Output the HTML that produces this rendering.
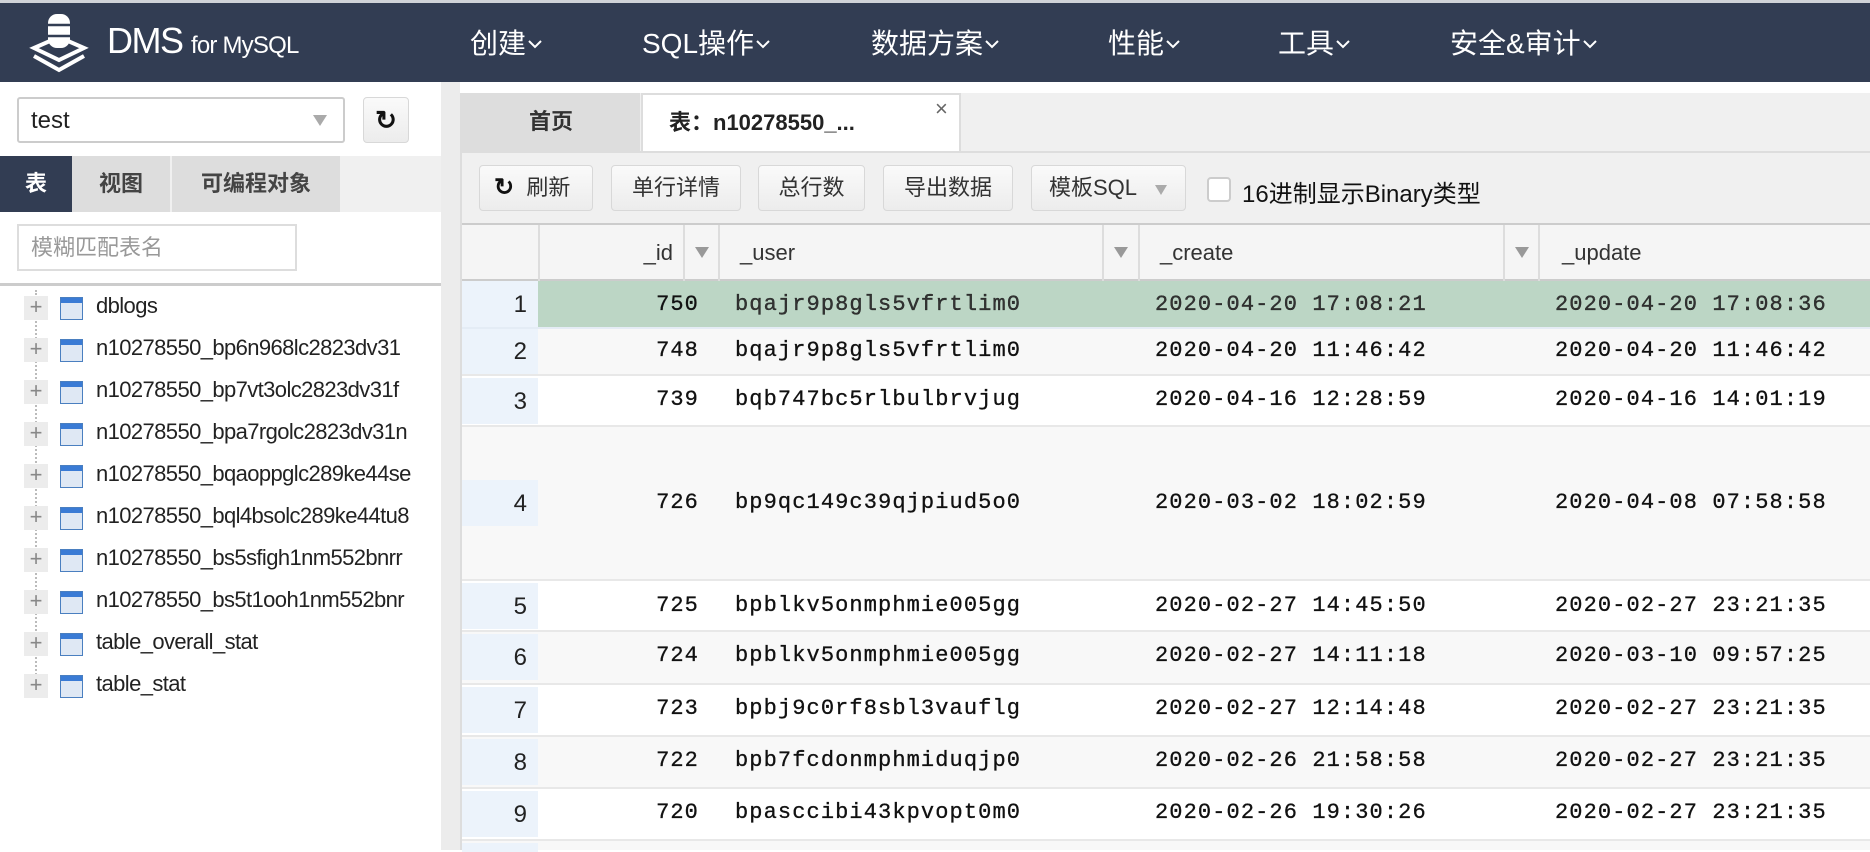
<!DOCTYPE html>
<html><head><meta charset="utf-8"><style>
*{margin:0;padding:0;box-sizing:border-box}
body{width:1870px;height:850px;overflow:hidden;background:#fff;position:relative;font-family:"Liberation Sans","Noto Sans CJK SC",sans-serif;color:#222}
.a{position:absolute}
.hdr{left:0;top:0;width:1870px;height:82px;background:#323d53;border-top:3px solid #d0d3d8}
.menu{top:22px;font-size:28px;color:#fff;white-space:nowrap}
.menu svg{margin-left:2px;vertical-align:4px}
.btn{background:linear-gradient(#fafafa,#ececec);border:1px solid #d8d8d8;border-radius:4px;font-size:22px;color:#333;text-align:center;line-height:44px}
.tree{left:24px;font-size:22px;height:26px}
.tree .p{position:absolute;left:0;top:0;width:24px;height:24px;background:#ececec;color:#888;font-size:22px;line-height:22px;text-align:center}
.tree .i{position:absolute;left:36px;top:1px;width:23px;height:23px;background:linear-gradient(#3a7bd5 0 5px,#dfe8f4 5px);border:1px solid #4a7fc0}
.tree .t{position:absolute;left:72px;top:-3px;white-space:nowrap;width:345px;overflow:hidden;letter-spacing:-0.6px}
.row{left:462px;width:1408px}
.rn{position:absolute;left:0;width:76px;background:#ecf3fb;font-size:24px;text-align:right;padding-right:11px}
.mono{position:absolute;font-family:"Liberation Mono",monospace;font-size:22px;letter-spacing:1.1px;color:#111;white-space:nowrap;-webkit-text-stroke:0.3px #111}
.hc{position:absolute;top:0;height:56px;border-left:2px solid #ddd;font-size:22px;line-height:56px;color:#333}
.arr{width:0;height:0;border-left:7px solid transparent;border-right:7px solid transparent;border-top:11px solid #999;position:absolute}
</style></head><body>
<div class="a hdr"></div>
<svg class="a" style="left:28px;top:10px" width="62" height="64" viewBox="0 0 62 64">
<path d="M6 38 L31 27 L56 38 L31 50 Z" fill="none" stroke="#fff" stroke-width="4"/>
<path d="M6 46 L31 60 L56 46" fill="none" stroke="#fff" stroke-width="4"/>
<rect x="20" y="4" width="22" height="34" rx="9" fill="#fff"/>
<line x1="20" y1="15" x2="42" y2="15" stroke="#323d53" stroke-width="2.5"/>
<line x1="20" y1="26" x2="42" y2="26" stroke="#323d53" stroke-width="2.5"/>
</svg>
<div class="a menu" style="left:107px;top:20px;font-size:36px;letter-spacing:-1.5px">DMS <span style="font-size:24px;letter-spacing:-0.8px">for MySQL</span></div>
<div class="a menu" style="left:470px">创建<svg width="14" height="9" viewBox="0 0 14 9"><path d="M1 1 L7 7 L13 1" fill="none" stroke="#fff" stroke-width="2"/></svg></div>
<div class="a menu" style="left:642px">SQL操作<svg width="14" height="9" viewBox="0 0 14 9"><path d="M1 1 L7 7 L13 1" fill="none" stroke="#fff" stroke-width="2"/></svg></div>
<div class="a menu" style="left:871px">数据方案<svg width="14" height="9" viewBox="0 0 14 9"><path d="M1 1 L7 7 L13 1" fill="none" stroke="#fff" stroke-width="2"/></svg></div>
<div class="a menu" style="left:1108px">性能<svg width="14" height="9" viewBox="0 0 14 9"><path d="M1 1 L7 7 L13 1" fill="none" stroke="#fff" stroke-width="2"/></svg></div>
<div class="a menu" style="left:1278px">工具<svg width="14" height="9" viewBox="0 0 14 9"><path d="M1 1 L7 7 L13 1" fill="none" stroke="#fff" stroke-width="2"/></svg></div>
<div class="a menu" style="left:1450px">安全&amp;审计<svg width="14" height="9" viewBox="0 0 14 9"><path d="M1 1 L7 7 L13 1" fill="none" stroke="#fff" stroke-width="2"/></svg></div>

<!-- left panel -->
<div class="a" style="left:441px;top:82px;width:19px;height:768px;background:#ececec"></div>
<div class="a" style="left:17px;top:97px;width:328px;height:46px;border:2px solid #ccc;border-radius:3px;font-size:24px;line-height:44px;padding-left:12px">test</div>
<div class="a arr" style="left:313px;top:115px;border-top-color:#aaa"></div>
<div class="a btn" style="left:363px;top:97px;width:46px;height:46px;font-size:26px;font-weight:bold;color:#111">↻</div>
<div class="a" style="left:0;top:156px;width:441px;height:56px;background:#f0f0f0"></div>
<div class="a" style="left:0;top:156px;width:72px;height:56px;background:#323d53;color:#fff;font-size:22px;font-weight:bold;line-height:56px;text-align:center">表</div>
<div class="a" style="left:72px;top:156px;width:98px;height:56px;background:#ddd;font-size:22px;font-weight:bold;color:#444;line-height:56px;text-align:center">视图</div>
<div class="a" style="left:172px;top:156px;width:168px;height:56px;background:#ddd;font-size:22px;font-weight:bold;color:#444;line-height:56px;text-align:center">可编程对象</div>
<div class="a" style="left:17px;top:224px;width:280px;height:47px;border:2px solid #ddd;font-size:22px;color:#999;line-height:43px;padding-left:12px">模糊匹配表名</div>
<div class="a" style="left:0;top:283px;width:441px;height:3px;background:#ccc"></div>
<div class="a" style="left:35px;top:290px;height:400px;border-left:2px dotted #bbb"></div>
<div class="a tree" style="top:296px"><span class="p">+</span><span class="i"></span><span class="t">dblogs</span></div>
<div class="a tree" style="top:338px"><span class="p">+</span><span class="i"></span><span class="t">n10278550_bp6n968lc2823dv31</span></div>
<div class="a tree" style="top:380px"><span class="p">+</span><span class="i"></span><span class="t">n10278550_bp7vt3olc2823dv31f</span></div>
<div class="a tree" style="top:422px"><span class="p">+</span><span class="i"></span><span class="t">n10278550_bpa7rgolc2823dv31n</span></div>
<div class="a tree" style="top:464px"><span class="p">+</span><span class="i"></span><span class="t">n10278550_bqaoppglc289ke44se</span></div>
<div class="a tree" style="top:506px"><span class="p">+</span><span class="i"></span><span class="t">n10278550_bql4bsolc289ke44tu8</span></div>
<div class="a tree" style="top:548px"><span class="p">+</span><span class="i"></span><span class="t">n10278550_bs5sfigh1nm552bnrr</span></div>
<div class="a tree" style="top:590px"><span class="p">+</span><span class="i"></span><span class="t">n10278550_bs5t1ooh1nm552bnr</span></div>
<div class="a tree" style="top:632px"><span class="p">+</span><span class="i"></span><span class="t">table_overall_stat</span></div>
<div class="a tree" style="top:674px"><span class="p">+</span><span class="i"></span><span class="t">table_stat</span></div>

<!-- right panel -->
<div class="a" style="left:460px;top:93px;width:1410px;height:757px;background:#f0f0f0;border-left:2px solid #ddd"></div>
<div class="a" style="left:462px;top:93px;width:178px;height:58px;background:#ddd;font-size:22px;font-weight:bold;color:#333;line-height:58px;text-align:center">首页</div>
<div class="a" style="left:641px;top:93px;width:320px;height:58px;background:#fff;border:2px solid #ddd;border-bottom:none;font-size:22px;font-weight:bold;line-height:56px;padding-left:26px">表：n10278550_...</div>
<div class="a" style="left:935px;top:96px;font-size:22px;color:#666">×</div>
<div class="a" style="left:462px;top:151px;width:1408px;height:2px;background:#ddd"></div>
<div class="a btn" style="left:479px;top:165px;width:114px;height:46px;text-align:left;padding-left:14px"><b style="font-size:24px;color:#111">↻</b>&nbsp; 刷新</div>
<div class="a btn" style="left:611px;top:165px;width:130px;height:46px">单行详情</div>
<div class="a btn" style="left:758px;top:165px;width:107px;height:46px">总行数</div>
<div class="a btn" style="left:883px;top:165px;width:130px;height:46px">导出数据</div>
<div class="a btn" style="left:1031px;top:165px;width:155px;height:46px;text-align:left;padding-left:17px">模板SQL</div>
<div class="a arr" style="left:1155px;top:185px;border-left-width:6px;border-right-width:6px;border-top:10px solid #aaa"></div>
<div class="a" style="left:1207px;top:177px;width:24px;height:25px;border:2px solid #ccc;border-radius:4px;background:#fff"></div>
<div class="a" style="left:1242px;top:174px;font-size:24px;color:#111">16进制显示Binary类型</div>

<!-- table header -->
<div class="a" style="left:462px;top:223px;width:1408px;height:58px;background:#f5f5f5;border-top:2px solid #ccc;border-bottom:2px solid #ccc">
<div class="hc" style="left:-2px;width:78px"></div>
<div class="hc" style="left:76px;width:145px;text-align:right;padding-right:10px">_id</div>
<div class="hc" style="left:221px;width:35px"><span class="arr" style="left:10px;top:22px"></span></div>
<div class="hc" style="left:256px;width:384px;padding-left:20px">_user</div>
<div class="hc" style="left:640px;width:36px"><span class="arr" style="left:10px;top:22px"></span></div>
<div class="hc" style="left:676px;width:365px;padding-left:20px">_create</div>
<div class="hc" style="left:1041px;width:35px"><span class="arr" style="left:10px;top:22px"></span></div>
<div class="hc" style="left:1076px;width:332px;padding-left:22px">_update</div>
</div>

<!-- rows -->
<div class="a row" style="top:281px;height:46px;background:#bcd6c5"><div class="rn" style="top:0;height:46px;line-height:48px">1</div><span class="mono" style="right:1171px;top:11px">750</span><span class="mono" style="left:273px;top:11px;color:#333">bqajr9p8gls5vfrtlim0</span><span class="mono" style="left:693px;top:11px;color:#333">2020-04-20 17:08:21</span><span class="mono" style="left:1093px;top:11px;color:#333">2020-04-20 17:08:36</span></div>
<div class="a row" style="top:327px;height:49px;background:#f8f8f8;border-top:2px solid #e4ecf5;border-bottom:2px solid #e8e8e8"><div class="rn" style="top:0;height:45px;line-height:45px">2</div><span class="mono" style="right:1171px;top:9px">748</span><span class="mono" style="left:273px;top:9px">bqajr9p8gls5vfrtlim0</span><span class="mono" style="left:693px;top:9px">2020-04-20 11:46:42</span><span class="mono" style="left:1093px;top:9px">2020-04-20 11:46:42</span></div>
<div class="a row" style="top:376px;height:51px;background:#fff;border-bottom:2px solid #e8e8e8"><div class="rn" style="top:2px;height:46px;line-height:48px">3</div><span class="mono" style="right:1171px;top:11px">739</span><span class="mono" style="left:273px;top:11px">bqb747bc5rlbulbrvjug</span><span class="mono" style="left:693px;top:11px">2020-04-16 12:28:59</span><span class="mono" style="left:1093px;top:11px">2020-04-16 14:01:19</span></div>
<div class="a row" style="top:427px;height:154px;background:#f8f8f8;border-bottom:2px solid #e8e8e8"><div class="rn" style="top:53px;height:46px;line-height:48px">4</div><span class="mono" style="right:1171px;top:63px">726</span><span class="mono" style="left:273px;top:63px">bp9qc149c39qjpiud5o0</span><span class="mono" style="left:693px;top:63px">2020-03-02 18:02:59</span><span class="mono" style="left:1093px;top:63px">2020-04-08 07:58:58</span></div>
<div class="a row" style="top:581px;height:51px;background:#fff;border-bottom:2px solid #e8e8e8"><div class="rn" style="top:2px;height:46px;line-height:48px">5</div><span class="mono" style="right:1171px;top:12px">725</span><span class="mono" style="left:273px;top:12px">bpblkv5onmphmie005gg</span><span class="mono" style="left:693px;top:12px">2020-02-27 14:45:50</span><span class="mono" style="left:1093px;top:12px">2020-02-27 23:21:35</span></div>
<div class="a row" style="top:632px;height:53px;background:#f8f8f8;border-bottom:2px solid #e8e8e8"><div class="rn" style="top:2px;height:46px;line-height:48px">6</div><span class="mono" style="right:1171px;top:11px">724</span><span class="mono" style="left:273px;top:11px">bpblkv5onmphmie005gg</span><span class="mono" style="left:693px;top:11px">2020-02-27 14:11:18</span><span class="mono" style="left:1093px;top:11px">2020-03-10 09:57:25</span></div>
<div class="a row" style="top:685px;height:52px;background:#fff;border-bottom:2px solid #e8e8e8"><div class="rn" style="top:2px;height:46px;line-height:48px">7</div><span class="mono" style="right:1171px;top:11px">723</span><span class="mono" style="left:273px;top:11px">bpbj9c0rf8sbl3vauflg</span><span class="mono" style="left:693px;top:11px">2020-02-27 12:14:48</span><span class="mono" style="left:1093px;top:11px">2020-02-27 23:21:35</span></div>
<div class="a row" style="top:737px;height:52px;background:#f8f8f8;border-bottom:2px solid #e8e8e8"><div class="rn" style="top:2px;height:46px;line-height:48px">8</div><span class="mono" style="right:1171px;top:11px">722</span><span class="mono" style="left:273px;top:11px">bpb7fcdonmphmiduqjp0</span><span class="mono" style="left:693px;top:11px">2020-02-26 21:58:58</span><span class="mono" style="left:1093px;top:11px">2020-02-27 23:21:35</span></div>
<div class="a row" style="top:789px;height:52px;background:#fff;border-bottom:2px solid #e8e8e8"><div class="rn" style="top:2px;height:46px;line-height:48px">9</div><span class="mono" style="right:1171px;top:11px">720</span><span class="mono" style="left:273px;top:11px">bpasccibi43kpvopt0m0</span><span class="mono" style="left:693px;top:11px">2020-02-26 19:30:26</span><span class="mono" style="left:1093px;top:11px">2020-02-27 23:21:35</span></div>
<div class="a row" style="top:841px;height:9px;background:#f8f8f8"><div class="rn" style="top:2px;height:9px"></div></div>
</body></html>
